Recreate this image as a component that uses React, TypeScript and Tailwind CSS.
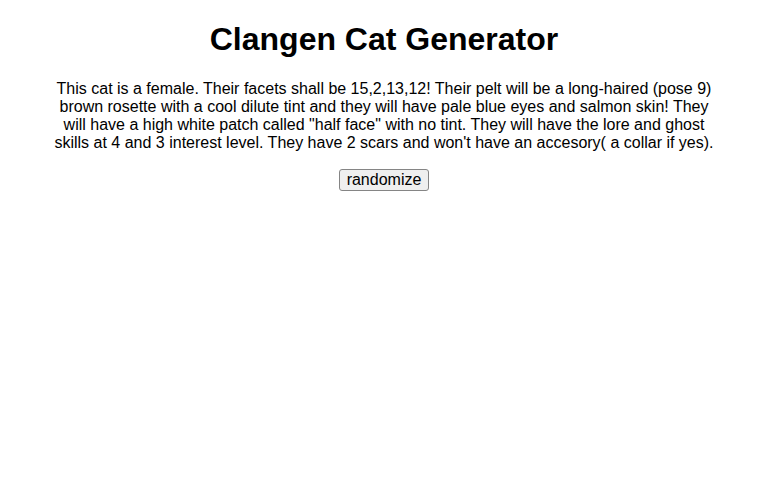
import { useState } from 'react';

const description =
  'This cat is a female. Their facets shall be 15,2,13,12! Their pelt will be a long-haired (pose 9) brown rosette with a cool dilute tint and they will have pale blue eyes and salmon skin! They will have a high white patch called "half face" with no tint. They will have the lore and ghost skills at 4 and 3 interest level. They have 2 scars and won\'t have an accesory( a collar if yes).';

export default function App() {
  const [text, setText] = useState(description);

  return (
    <div className="min-h-screen bg-white text-black text-center font-['Liberation_Sans',Arial,sans-serif]">
      <h1 className="pt-[21px] text-[32px] leading-[37px] font-bold">Clangen Cat Generator</h1>
      <p className="mx-auto mt-[22px] w-[672px] text-base leading-[18px]">{text}</p>
      <button
        className="mt-[17px] rounded-[3px] border border-[#858585] bg-[#efefef] px-[7px] py-[1px] text-base leading-[18px] hover:bg-[#e5e5e5]"
        onClick={() => setText(description)}
      >
        randomize
      </button>
    </div>
  );
}
